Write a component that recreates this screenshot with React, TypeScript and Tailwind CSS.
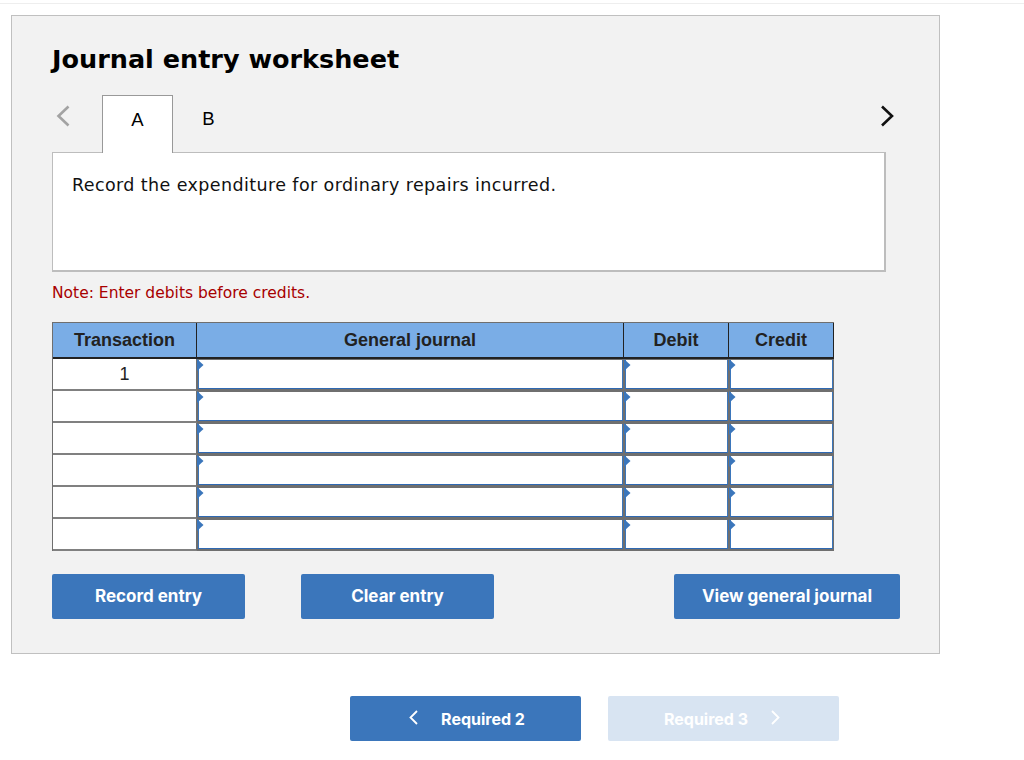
import React from "react";

const rows = ["1", "", "", "", "", ""];

function Entry() {
  return (
    <div className="relative h-[32px] border-r border-[#6f6f6f] bg-[#6f6f6f] pb-[2px] pl-px pt-[1px]">
      <div className="h-full border border-t-0 border-[#3b76bb] border-b-[#2f69b3] bg-white" />
      <svg className="absolute left-0 top-0" width="8" height="12" viewBox="0 0 8 12">
        <path d="M0 0 L6.5 6 L0 12 Z" fill="#3b76bb" />
      </svg>
    </div>
  );
}

function Head({ children }: { children: React.ReactNode }) {
  return (
    <div className="flex h-[36px] items-center justify-center border-r border-b-2 border-r-[#222] border-b-[#222] bg-[#7aade6] text-[18px] font-bold text-[#222]">
      {children}
    </div>
  );
}

function ActionButton({ children, className }: { children: React.ReactNode; className: string }) {
  return (
    <button className={`h-[45px] rounded-[2px] bg-[#3b76bb] text-[17px] font-bold text-white ${className}`}>
      {children}
    </button>
  );
}

export default function App() {
  return (
    <div className="h-[760px] w-[1024px] overflow-hidden bg-white pt-[3px] font-['Liberation_Sans',sans-serif]">
      <div className="h-px w-full bg-[#eeeeee]" />
      <div className="ml-[11px] mt-[11px] h-[639px] w-[929px] border border-[#c0c0c0] bg-[#f2f2f2] pl-[40px]">
        <h1 className="mt-[25px] h-[36px] font-['DejaVu_Sans',sans-serif] text-[25.5px] leading-[36px] font-bold text-black">
          Journal entry worksheet
        </h1>

        <div className="relative mt-[18px] flex h-[57px] w-[833px] pl-[50px]">
          <svg className="absolute left-[4px] top-[9px]" width="16" height="24" viewBox="0 0 16 24" fill="none">
            <path d="M12.5 2.5 L2.5 12 L12.5 21.5" stroke="#a3a3a3" strokeWidth="2.6" />
          </svg>
          <div className="relative z-10 flex h-[58px] w-[71px] justify-center border border-b-0 border-[#999999] bg-white pt-[13px] text-[18.5px] leading-[21px] text-black">
            A
          </div>
          <div className="flex w-[71px] justify-center pt-[13px] text-[18.5px] leading-[21px] text-black">B</div>
          <svg className="absolute left-[827px] top-[9px]" width="16" height="24" viewBox="0 0 16 24" fill="none">
            <path d="M3 2.5 L13 12 L3 21.5" stroke="#111111" strokeWidth="2.6" />
          </svg>
        </div>

        <div className="h-[120px] w-[834px] border border-b-2 border-r-2 border-[#bdbdbd] bg-white pl-[19px] pt-[20px] font-['DejaVu_Sans',sans-serif] text-[17.5px] leading-[24px] tracking-[0.4px] text-[#111]">
          Record the expenditure for ordinary repairs incurred.
        </div>

        <p className="mt-[10px] h-[22px] font-['DejaVu_Sans',sans-serif] text-[15.5px] leading-[22px] text-[#a80000]">
          Note: Enter debits before credits.
        </p>

        <div className="mt-[18px] w-[782px] border-t border-l border-[#6f6f6f] bg-white">
          <div className="grid grid-cols-[144px_427px_105px_105px]">
            <Head>Transaction</Head>
            <Head>General journal</Head>
            <Head>Debit</Head>
            <Head>Credit</Head>
            {rows.map((r, i) => (
              <React.Fragment key={i}>
                <div className="flex h-[32px] items-start justify-center border-r border-b-2 border-r-[#6f6f6f] border-b-[#808080] pt-[5px] text-[18px] leading-[21px] text-[#222]">
                  {r}
                </div>
                <Entry />
                <Entry />
                <Entry />
              </React.Fragment>
            ))}
          </div>
        </div>

        <div className="mt-[23px] flex w-[848px] justify-between font-['Inter',sans-serif]">
          <div className="flex gap-[56px]">
            <ActionButton className="w-[193px]">Record entry</ActionButton>
            <ActionButton className="w-[193px]">Clear entry</ActionButton>
          </div>
          <ActionButton className="w-[226px]">View general journal</ActionButton>
        </div>
      </div>

      <div className="ml-[350px] mt-[42px] flex gap-[27px] font-['Inter',sans-serif]">
        <button className="relative flex h-[45px] w-[231px] items-center justify-center rounded-[2px] bg-[#3b76bb] pl-[35px] pt-[1px] text-[16px] font-bold text-white">
          <svg className="absolute left-[58px] top-[14px]" width="11" height="15" viewBox="0 0 11 15" fill="none">
            <path d="M9 1 L2.5 7.5 L9 14" stroke="#ffffff" strokeWidth="1.8" />
          </svg>
          Required 2
        </button>
        <button className="relative flex h-[45px] w-[231px] items-center justify-center rounded-[2px] bg-[#d8e4f2] pr-[35px] pt-[1px] text-[16px] font-bold text-white">
          Required 3
          <svg className="absolute left-[162px] top-[14px]" width="11" height="15" viewBox="0 0 11 15" fill="none">
            <path d="M2 1 L8.5 7.5 L2 14" stroke="#ffffff" strokeWidth="1.8" />
          </svg>
        </button>
      </div>
    </div>
  );
}
